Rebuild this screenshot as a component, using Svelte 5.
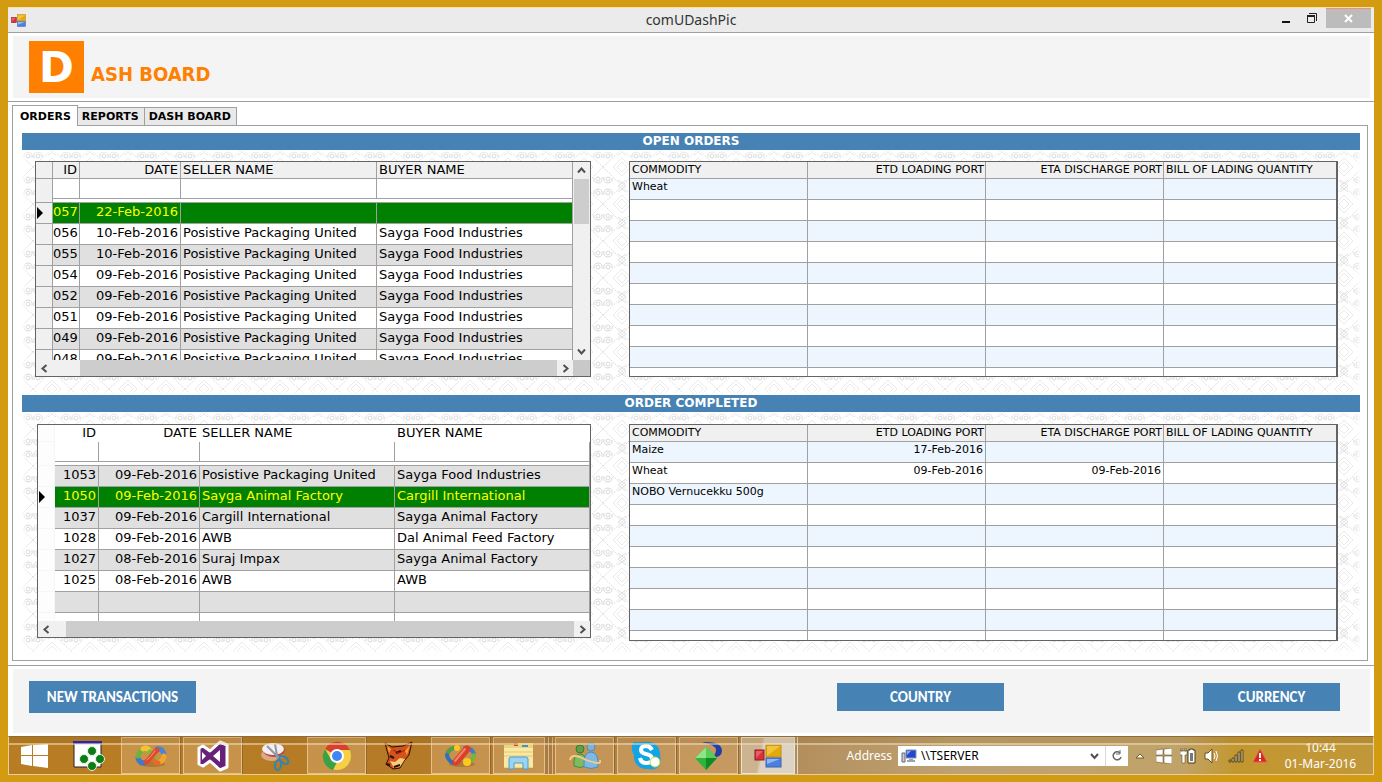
<script lang="ts">
  interface Order {
    id: string;
    date: string;
    seller: string;
    buyer: string;
  }

  interface Cargo {
    commodity: string;
    etd: string;
    eta: string;
    quantity: string;
  }

  const PACKAGING = 'Posistive Packaging United';
  const FOOD = 'Sayga Food Industries';
  const ANIMAL = 'Sayga Animal Factory';

  const tabs = ['ORDERS', 'REPORTS', 'DASH BOARD'];

  const openOrders: Order[] = [
    { id: '057', date: '22-Feb-2016', seller: '', buyer: '' },
    { id: '056', date: '10-Feb-2016', seller: PACKAGING, buyer: FOOD },
    { id: '055', date: '10-Feb-2016', seller: PACKAGING, buyer: FOOD },
    { id: '054', date: '09-Feb-2016', seller: PACKAGING, buyer: FOOD },
    { id: '052', date: '09-Feb-2016', seller: PACKAGING, buyer: FOOD },
    { id: '051', date: '09-Feb-2016', seller: PACKAGING, buyer: FOOD },
    { id: '049', date: '09-Feb-2016', seller: PACKAGING, buyer: FOOD },
    { id: '048', date: '09-Feb-2016', seller: PACKAGING, buyer: FOOD },
  ];

  const completedOrders: Order[] = [
    { id: '1053', date: '09-Feb-2016', seller: PACKAGING, buyer: FOOD },
    { id: '1050', date: '09-Feb-2016', seller: ANIMAL, buyer: 'Cargill International' },
    { id: '1037', date: '09-Feb-2016', seller: 'Cargill International', buyer: ANIMAL },
    { id: '1028', date: '09-Feb-2016', seller: 'AWB', buyer: 'Dal Animal Feed Factory' },
    { id: '1027', date: '08-Feb-2016', seller: 'Suraj Impax', buyer: ANIMAL },
    { id: '1025', date: '08-Feb-2016', seller: 'AWB', buyer: 'AWB' },
    { id: '', date: '', seller: '', buyer: '' },
    { id: '', date: '', seller: '', buyer: '' },
  ];

  const openCargo: Cargo[] = [{ commodity: 'Wheat', etd: '', eta: '', quantity: '' }];

  const completedCargo: Cargo[] = [
    { commodity: 'Maize', etd: '17-Feb-2016', eta: '', quantity: '' },
    { commodity: 'Wheat', etd: '09-Feb-2016', eta: '09-Feb-2016', quantity: '' },
    { commodity: 'NOBO Vernucekku 500g', etd: '', eta: '', quantity: '' },
  ];

  // the cargo grids always show ten lines, filled or not
  function padRows(rows: Cargo[]): Cargo[] {
    const blank = { commodity: '', etd: '', eta: '', quantity: '' };
    return [...rows, ...Array(10 - rows.length).fill(blank)];
  }

  let activeTab = $state('ORDERS');
  let openRow = $state(0);
  let completedRow = $state(1);
</script>

<svelte:head>
  <title>comUDashPic</title>
</svelte:head>

{#snippet formsIcon(size: number)}
  <svg width={size} height={size} viewBox="0 0 28 28" aria-hidden="true">
    <rect x="1" y="8" width="9" height="10" fill="#d9333a" stroke="#8e1820" />
    <path d="M2 9h7L2 16z" fill="#f08080" opacity="0.6" />
    <rect x="12" y="3" width="15" height="12" fill="#e5a90a" stroke="#c08a10" />
    <path d="M13 4h13L13 14z" fill="#f7cf55" opacity="0.7" />
    <rect x="12" y="16" width="15" height="9" fill="#4c80de" stroke="#3c62b4" />
    <path d="M13 17h13l-13 5z" fill="#a3c4fa" opacity="0.8" />
  </svg>
{/snippet}

{#snippet chevron(d: string)}
  <svg class="chevron" width="9" height="9" viewBox="0 0 9 9" aria-hidden="true">
    <path {d} fill="none" stroke="#505050" stroke-width="2" />
  </svg>
{/snippet}

{#snippet ringsIcon()}
  <svg width="32" height="24" viewBox="0 0 32 24" aria-hidden="true">
    <ellipse cx="17" cy="20" rx="13" ry="3" fill="#7a4a18" opacity="0.35" />
    <g fill="none" stroke-width="5" stroke-linecap="round">
      <path d="M10 19q-6 0-7-5" stroke="#3f78cf" />
      <path d="M3 12q1-4 4-6" stroke="#6fb23a" />
      <path d="M8 5q4-2 6 1" stroke="#f4c430" />
      <path d="M15 8l5 7" stroke="#7db83a" />
      <path d="M22 5q5-1 7 5" stroke="#4a84d8" />
      <path d="M29 12q0 4-4 6" stroke="#f2a52c" />
      <path d="M23 19q-2 0-4-2" stroke="#e86a2a" />
      <path d="M11 18q2-1 5-5t6-7" stroke="#e2492c" />
      <path d="M12 16q3-2 8-9" stroke="#f79a80" stroke-width="1" />
    </g>
  </svg>
{/snippet}

{#snippet linksIcon()}
  <svg width="32" height="24" viewBox="0 0 32 24" aria-hidden="true">
    <ellipse cx="17" cy="20" rx="13" ry="3" fill="#7a4a18" opacity="0.35" />
    <g fill="none" stroke-width="4" stroke-linecap="round">
      <path d="M9 4q-7 2-7 8" stroke="#4fa048" />
      <path d="M2 11q1 6 7 8" stroke="#2f6fc0" />
      <path d="M20 4q7 0 9 6" stroke="#3f78cf" />
      <path d="M29 11q0 5-7 8" stroke="#74b53a" />
      <path d="M11 18L22 5" stroke="#d9402a" stroke-width="7" />
      <path d="M10 17L20 5" stroke="#f08468" stroke-width="2" />
    </g>
    <circle cx="12" cy="4" r="3" fill="#ffc81e" />
    <circle cx="22" cy="18" r="4" fill="#ffc81e" />
  </svg>
{/snippet}

{#snippet orderGrid(rows: Order[], selected: number, pick: (i: number) => void, label: string)}
  <table class="orders" aria-label={label}>
    <colgroup>
      <col class="colMark" />
      <col class="colId" />
      <col class="colDate" />
      <col />
      <col />
    </colgroup>
    <thead>
      <tr>
        <th class="mark"></th>
        <th class="num">ID</th>
        <th class="num">DATE</th>
        <th>SELLER NAME</th>
        <th>BUYER NAME</th>
      </tr>
    </thead>
    <tbody>
      <tr class="filter">
        <td class="mark" rowspan="2"></td>
        <td><input type="text" aria-label="Filter {label} by id" /></td>
        <td><input type="text" aria-label="Filter {label} by date" /></td>
        <td><input type="text" aria-label="Filter {label} by seller" /></td>
        <td><input type="text" aria-label="Filter {label} by buyer" /></td>
      </tr>
      <tr class="divider"><td colspan="4"></td></tr>
      {#each rows as row, i}
        <tr class="row" class:shaded={i % 2 === 0} class:selected={i === selected} onclick={() => pick(i)}>
          <td class="mark">
            {#if i === selected}
              <svg width="7" height="12" viewBox="0 0 7 12" aria-hidden="true">
                <path d="M1 0l6 6-6 6z" fill="#000" />
              </svg>
            {/if}
          </td>
          <td class="num">{row.id}</td>
          <td class="num">{row.date}</td>
          <td>{row.seller}</td>
          <td>{row.buyer}</td>
        </tr>
      {/each}
    </tbody>
  </table>
{/snippet}

{#snippet cargoGrid(rows: Cargo[], label: string)}
  <table class="cargo" aria-label={label}>
    <colgroup>
      <col class="colCargo" />
      <col class="colCargo" />
      <col class="colCargo" />
      <col />
    </colgroup>
    <thead>
      <tr>
        <th>COMMODITY</th>
        <th class="num">ETD LOADING PORT</th>
        <th class="num">ETA DISCHARGE PORT</th>
        <th>BILL OF LADING QUANTITY</th>
      </tr>
    </thead>
    <tbody>
      {#each padRows(rows) as row, i}
        <tr class:tinted={i % 2 === 0}>
          <td>{row.commodity}</td>
          <td class="num">{row.etd}</td>
          <td class="num">{row.eta}</td>
          <td>{row.quantity}</td>
        </tr>
      {/each}
    </tbody>
  </table>
{/snippet}

<div class="desktop">
  <div class="window">
    <header class="titleBar">
      <span class="appIcon">{@render formsIcon(15)}</span>
      <span class="caption">comUDashPic</span>
      <div class="windowButtons">
        <button type="button" aria-label="Minimize">
          <svg width="12" height="12" viewBox="0 0 12 12"><path d="M2 9h8v2H2z" fill="#111" /></svg>
        </button>
        <button type="button" aria-label="Restore">
          <svg width="12" height="12" viewBox="0 0 12 12" fill="none" stroke="#222">
            <path d="M3 1.5h7.5V9" />
            <path d="M1.5 4.5h7v6h-7z" />
            <path d="M1 4h8" stroke-width="2" />
          </svg>
        </button>
        <button type="button" class="close" aria-label="Close">
          <svg width="9" height="9" viewBox="0 0 9 9"><path d="M1 1l7 7M8 1l-7 7" stroke="#fff" stroke-width="2" /></svg>
        </button>
      </div>
    </header>

    <div class="brand">
      <div class="brandPanel">
        <span class="brandLetter">D</span>
        <h1>ASH BOARD</h1>
      </div>
    </div>

    <div class="tabs" role="tablist">
      {#each tabs as tab}
        <button
          type="button"
          role="tab"
          class="tab"
          class:active={tab === activeTab}
          aria-selected={tab === activeTab}
          onclick={() => (activeTab = tab)}
        >{tab}</button>
      {/each}
    </div>

    <main class="panel">
      <h2>OPEN ORDERS</h2>
      <section class="ornate open">
        <div class="box orderBox">
          <div class="view">
            {@render orderGrid(openOrders, openRow, (i) => (openRow = i), 'Open orders')}
          </div>
          <div class="vbar">
            <span class="arrow">{@render chevron('M1 6.5l3.5-4 3.5 4')}</span>
            <span class="vthumb"></span>
            <span class="arrow last">{@render chevron('M1 2.5l3.5 4 3.5-4')}</span>
          </div>
          <div class="hbar">
            <span class="arrow">{@render chevron('M6.5 1l-4 3.5 4 3.5')}</span>
            <span class="hthumb"></span>
            <span class="arrow">{@render chevron('M2.5 1l4 3.5-4 3.5')}</span>
          </div>
          <div class="corner"></div>
        </div>
        <div class="box cargoBox">
          {@render cargoGrid(openCargo, 'Open order cargo')}
        </div>
      </section>

      <h2>ORDER COMPLETED</h2>
      <section class="ornate completed">
        <div class="box orderBox plain">
          <div class="view">
            {@render orderGrid(completedOrders, completedRow, (i) => (completedRow = i), 'Completed orders')}
          </div>
          <div class="hbar">
            <span class="arrow">{@render chevron('M6.5 1l-4 3.5 4 3.5')}</span>
            <span class="hthumb"></span>
            <span class="arrow">{@render chevron('M2.5 1l4 3.5-4 3.5')}</span>
          </div>
        </div>
        <div class="box cargoBox">
          {@render cargoGrid(completedCargo, 'Completed order cargo')}
        </div>
      </section>
    </main>

    <footer class="actions">
      <div class="actionPanel">
        <button type="button" class="action tall">NEW TRANSACTIONS</button>
        <button type="button" class="action country">COUNTRY</button>
        <button type="button" class="action currency">CURRENCY</button>
      </div>
    </footer>
  </div>

  <nav class="taskbar" aria-label="Taskbar">
    <button type="button" class="start" aria-label="Start">
      <svg width="27" height="24" viewBox="0 0 27 24" fill="#fff">
        <path d="M0 3l11-2v10H0zM12 1l15-1v11H12zM0 12h11v10L0 20zM12 12h15v12l-15-2z" />
      </svg>
    </button>

    <button type="button" class="task" aria-label="Nodes">
      <svg width="34" height="30" viewBox="0 0 34 30">
        <path d="M2 1h27v25H2z" fill="#fff" stroke="#222" />
        <path d="M1 0h29v3H1z" fill="#1b22c8" />
        <g fill="#0a7d16" stroke="#e9f2e4">
          <circle cx="20" cy="10" r="4.5" />
          <circle cx="12" cy="18" r="4.5" />
          <circle cx="28" cy="18" r="4.5" />
          <circle cx="20" cy="25" r="4.5" />
        </g>
      </svg>
    </button>

    <button type="button" class="task framed" aria-label="Data tools">{@render ringsIcon()}</button>

    <button type="button" class="task framed" aria-label="Visual Studio">
      <svg width="34" height="32" viewBox="0 0 34 32">
        <path d="M24 2l7 3v22l-7 3-10-9-7 5-4-2V8l4-2 7 5z" fill="#68217a" stroke="#fff" stroke-width="3" stroke-linejoin="round" />
        <path d="M24 10v12l-7-6zM6 12l4 4-4 4z" fill="#fff" />
      </svg>
    </button>

    <button type="button" class="task" aria-label="Snipping Tool">
      <svg width="32" height="30" viewBox="0 0 32 30">
        <ellipse cx="13" cy="14" rx="11" ry="6" fill="#dca988" />
        <ellipse cx="15" cy="9" rx="11" ry="7" fill="#c0453c" />
        <ellipse cx="14" cy="8" rx="11" ry="6" fill="#f2eef2" />
        <path d="M8 5l13 13M16 3l3 17" stroke="#8f98a4" stroke-width="2" />
        <ellipse cx="25" cy="19" rx="5" ry="3" fill="none" stroke="#2d86b4" stroke-width="2" transform="rotate(38 25 19)" />
        <ellipse cx="19" cy="24" rx="3" ry="5" fill="none" stroke="#2d86b4" stroke-width="2" transform="rotate(12 19 24)" />
      </svg>
    </button>

    <button type="button" class="task framed" aria-label="Chrome">
      <svg width="30" height="30" viewBox="0 0 30 30">
        <circle cx="15" cy="15" r="14" fill="#f5cf45" />
        <path d="M15 15L3 8A14 14 0 0 1 28 9H15z" fill="#d5402f" />
        <path d="M3 8l7 12 5 1-4 8A14 14 0 0 1 3 8z" fill="#3ba146" />
        <circle cx="15" cy="15" r="7" fill="#fff" />
        <circle cx="15" cy="15" r="5" fill="#4285f4" />
      </svg>
    </button>

    <button type="button" class="task" aria-label="FoxPro">
      <svg width="32" height="30" viewBox="0 0 32 30">
        <path d="M2 2l7 4 11-1 9-4-3 13-5 6-4 7-7 1-7-5 3-6z" fill="#d4521c" stroke="#2a1008" />
        <path d="M4 5l4 3-2 4zM27 4l-5 6 2 4z" fill="#efa32d" />
        <path d="M7 20l5 1 5-4 5 1-5 8-6 1z" fill="#f5cf7a" />
        <path d="M7 15l4 2M13 12l5-2M3 23l4 1M11 26l6-2" stroke="#2a1008" stroke-width="2" />
        <path d="M10 9l6 3 6-3" stroke="#a31b10" fill="none" />
      </svg>
    </button>

    <button type="button" class="task framed" aria-label="Data links">{@render linksIcon()}</button>

    <button type="button" class="task framed stacked" aria-label="File Explorer">
      <svg width="34" height="28" viewBox="0 0 34 28">
        <path d="M2 3h10l2-2h17v25H2z" fill="#ecd47c" />
        <path d="M2 6h29v19H2z" fill="#f8e9a6" />
        <path d="M12 1h4v3h-4z" fill="#d2472e" />
        <path d="M20 3h6v2h-6z" fill="#4a90d0" />
        <path d="M2 10h29M2 14h29" stroke="#e3c668" />
        <path d="M7 27V17q0-2 2-2h15q2 0 2 2v10h-5v-6h-9v6z" fill="#9bd3f3" stroke="#4c9ccf" />
      </svg>
    </button>

    <button type="button" class="task framed" aria-label="Messenger">
      <svg width="32" height="28" viewBox="0 0 32 28">
        <circle cx="11" cy="7" r="4" fill="#5f9f48" stroke="#3d7a2c" />
        <path d="M5 24q-1-12 6-12t6 12q-6 3-12 0z" fill="#7dbb62" stroke="#4b8a38" />
        <circle cx="22" cy="5" r="4" fill="#78b4dc" stroke="#4d8cbc" />
        <path d="M15 25q-1-15 7-15t7 15q-7 3-14 0z" fill="#7fb8e2" stroke="#4d8cbc" />
        <path d="M1 18q1-6 10-3 9 5 18 6 3 0 2-3" fill="none" stroke="#f2cf85" stroke-width="2" />
      </svg>
    </button>

    <button type="button" class="task framed" aria-label="Skype">
      <svg width="32" height="30" viewBox="0 0 32 30">
        <path d="M3 1h10c10-2 17 5 16 14 3 9-3 15-11 13C8 29 2 22 3 14 0 9 0 4 3 1z" fill="#12a5e6" />
        <path d="M21 9q-2-4-6-4-5 0-5 4 0 3 5 4 6 1 6 5t-6 4q-5 0-6-5" fill="none" stroke="#fff" stroke-width="4" />
        <circle cx="24" cy="21" r="5" fill="#fff" stroke="#c9d93c" />
      </svg>
    </button>

    <button type="button" class="task framed" aria-label="Downloads">
      <svg width="30" height="32" viewBox="0 0 30 32">
        <path d="M8 2q20-1 20 9 0 6-10 7 4-4 4-8 0-5-14-8z" fill="#223fa8" />
        <path d="M12 7l11 11-11 12L1 18z" fill="#2eb43a" />
        <path d="M12 7v11H1z" fill="#8ee487" />
        <path d="M12 7l11 11H12z" fill="#55cf57" />
        <path d="M12 30V18h11z" fill="#0f8a24" />
      </svg>
    </button>

    <button type="button" class="task framed current" aria-label="comUDashPic">{@render formsIcon(28)}</button>

    <div class="tray">
      <label class="addressLabel" for="address">Address</label>
      <div class="address">
        <svg width="16" height="14" viewBox="0 0 16 14" aria-hidden="true">
          <path d="M1 4h3v9H1z" fill="#c4ccd6" stroke="#667" />
          <path d="M5 1h10v8H5z" fill="#2348cf" stroke="#8a94a6" />
          <path d="M6 2h4L6 6z" fill="#88a8f6" />
          <path d="M8 10h4v1h2v2H6v-2h2z" fill="#9aa4b0" />
        </svg>
        <select id="address"><option>\\TSERVER</option></select>
        {@render chevron('M1 3l3.5 4 3.5-4')}
        <button type="button" aria-label="Refresh">
          <svg width="12" height="12" viewBox="0 0 12 12" fill="none" stroke="#666">
            <path d="M9 3a4 4 0 1 0 1 4" stroke-width="1.5" />
            <path d="M9 0v4H5" />
          </svg>
        </button>
      </div>
      <div class="trayIcons">
        <svg width="16" height="16" viewBox="0 0 16 16"><path d="M4 10l4-4 4 4z" fill="#fff" stroke="#7a5a20" /></svg>
        <svg width="16" height="16" viewBox="0 0 16 16" fill="#fff" stroke="#5c4514">
          <path d="M0 2l7-1v6H0zM8 1l8-1v7H8zM0 8h7v7l-7-1zM8 8h8v8l-8-1z" stroke-width="0.5" />
        </svg>
        <svg width="16" height="16" viewBox="0 0 16 16" fill="#fff" stroke="#4a3a18">
          <path d="M0 3h7v4H5v8H2V7H0zM1 0h1v3H1zM5 0h1v3H5z" stroke-width="0.5" />
          <path d="M8 2h2V1h3v1h2v13H8z" />
          <path d="M10 5h3v8h-3z" fill="#777" stroke="none" />
        </svg>
        <svg width="16" height="16" viewBox="0 0 16 16" fill="none" stroke="#fff">
          <path d="M1 5h3l4-4v14l-4-4H1z" fill="#fff" stroke="#6a5018" />
          <path d="M10 5q2 3 0 6M12 3q3 5 0 10" />
        </svg>
        <svg width="16" height="16" viewBox="0 0 16 16" fill="#d8ccb0" stroke="#5a4718">
          <path d="M1 12h2v2H1zM4 10h2v4H4zM7 7h2v7H7zM10 4h2v10h-2zM13 2h2v12h-2z" />
        </svg>
        <svg width="16" height="16" viewBox="0 0 16 16">
          <path d="M8 1l7 13H1z" fill="#d9251f" stroke="#e8604a" stroke-linejoin="round" />
          <path d="M8 5v5M8 11v2" stroke="#fff" stroke-width="2" />
        </svg>
      </div>
      <div class="clock">
        <span>10:44</span>
        <span>01-Mar-2016</span>
      </div>
    </div>
  </nav>
</div>

<style>
  :global(body) {
    background: #d39b12;
  }

  .desktop {
    padding: 7px 8px;
    font-family: Verdana, 'DejaVu Sans', sans-serif;
    font-size: 13px;
    color: #000;
  }

  .window {
    background: #fff;
  }

  button {
    padding: 0;
    border: 0;
    background: none;
    color: inherit;
    font: inherit;
  }

  svg {
    display: block;
    flex: none;
  }

  .titleBar {
    display: grid;
    grid-template-columns: 1fr auto 1fr;
    align-items: center;
    height: 26px;
    box-sizing: border-box;
    padding: 0 3px;
    background: #ebebeb;
    border-top: 1px solid #ffe09a;
    border-bottom: 1px solid #a0a0a0;
  }

  .caption {
    font-family: 'Segoe UI', 'Noto Sans', sans-serif;
    font-size: 14px;
    line-height: 20px;
    color: #333;
  }

  .windowButtons {
    display: flex;
    justify-content: flex-end;
    align-self: start;
  }

  .windowButtons button {
    display: flex;
    align-items: center;
    justify-content: center;
    width: 26px;
    height: 20px;
  }

  .windowButtons .close {
    width: 45px;
    margin-left: 1px;
    background: #bcbcbc;
    border-top: 1px solid #f08c80;
  }

  .brand {
    padding: 3px 4px 3px 5px;
    border-bottom: 1px solid #a0a0a0;
  }

  .brandPanel {
    display: flex;
    gap: 7px;
    padding: 5px 16px;
    background: #f4f4f4;
    color: #ff8000;
    font-weight: 700;
  }

  .brandLetter {
    width: 55px;
    height: 52px;
    background: #ff8000;
    color: #fff;
    font-size: 42px;
    line-height: 54px;
    text-align: center;
  }

  h1 {
    margin: 0;
    padding-top: 20px;
    font-family: Tahoma, 'DejaVu Sans Condensed', sans-serif;
    font-size: 20px;
    line-height: 26px;
  }

  .tabs {
    display: flex;
    align-items: flex-end;
    padding: 3px 4px 0;
  }

  .tab {
    height: 18px;
    padding: 0 5px 0 4px;
    border: 1px solid #a0a0a0;
    border-width: 1px 1px 0 0;
    background: #e9e9e9;
    font-size: 11px;
    font-weight: 700;
    line-height: 17px;
  }

  .tab.active {
    position: relative;
    height: 21px;
    margin-bottom: -1px;
    padding: 0 6px 0 7px;
    border-left-width: 1px;
    background: #fff;
  }

  .panel {
    margin: 0 6px 4px 4px;
    padding: 7px 7px 7px 9px;
    border: 1px solid #a0a0a0;
  }

  h2 {
    margin: 0;
    background: #4682b4;
    color: #fff;
    font-size: 12px;
    line-height: 17px;
    text-align: center;
  }

  /* scrollwork lattice behind the grids */
  .ornate {
    display: grid;
    align-items: start;
    column-gap: 38px;
    background: #fff url("data:image/svg+xml,%3Csvg xmlns='http://www.w3.org/2000/svg' width='38' height='37'%3E%3Cg fill='none' stroke='%23dedede'%3E%3Cpath d='M0 18L19 0L38 18L19 37Z' stroke-dasharray='2 1'/%3E%3Cpath d='M14 18l5-5 5 5-5 5zM10 18l9-9 9 9-9 9z' stroke='%23eaeaea'/%3E%3Cpath d='M15 0l8 6M23 0l-8 6M15 37l8-6M23 37l-8-6'/%3E%3Cg stroke='%23d8d8d8'%3E%3Ccircle cx='5' cy='7' r='2'/%3E%3Ccircle cx='33' cy='7' r='2'/%3E%3Ccircle cx='5' cy='30' r='2'/%3E%3Ccircle cx='33' cy='30' r='2'/%3E%3Cpath d='M1 9q-1-6 4-6 5 1 4 5M37 9q1-6-4-6-5 1-4 5M1 28q-1 6 4 6 5-1 4-5M37 28q1 6-4 6-5-1-4-5'/%3E%3C/g%3E%3C/g%3E%3C/svg%3E") 11px 36px;
    box-shadow: inset 0 0 4px 2px #fff;
  }

  .open {
    grid-template-columns: 556fr 709fr;
    padding: 11px 22px 18px 13px;
  }

  .completed {
    grid-template-columns: 554fr 709fr;
    padding: 12px 22px 12px 15px;
  }

  .box {
    border: 1px solid #646464;
    background: #fff;
    overflow: hidden;
    min-width: 0;
  }

  .orderBox {
    display: grid;
    grid-template: 198px 16px / minmax(0, 1fr) 17px;
  }

  .orderBox.plain {
    grid-template: 196px 16px / minmax(0, 1fr);
  }

  .cargoBox {
    height: 214px;
    border-right-width: 2px;
  }

  .completed .cargoBox {
    height: 215px;
  }

  .view {
    overflow: hidden;
  }

  table {
    width: 100%;
    table-layout: fixed;
    border-collapse: separate;
    border-spacing: 0;
    white-space: nowrap;
  }

  th,
  td {
    height: 20px;
    padding: 0 2px;
    border: 0 solid #a0a0a0;
    border-width: 0 1px 1px 0;
    overflow: hidden;
    font-weight: 400;
    line-height: 17px;
    text-align: left;
    vertical-align: top;
  }

  th {
    height: 16px;
    line-height: 16px;
    background: #f0f0f0;
  }

  .num {
    padding-left: 0;
    text-align: right;
  }

  .colMark {
    width: 17px;
  }

  .colId {
    width: 27px;
  }

  .plain .colId {
    width: 44px;
  }

  .colDate {
    width: 101px;
  }

  .colCargo {
    width: 178px;
  }

  .mark {
    background: #f0f0f0;
  }

  .row .mark {
    padding: 4px 0 0;
    height: 16px;
  }

  .filter td {
    height: 19px;
    padding: 0;
  }

  .filter input {
    display: block;
    width: 100%;
    height: 19px;
    box-sizing: border-box;
    padding: 0 2px;
    border: 0;
    outline: 0;
    background: none;
    font: inherit;
  }

  .divider td {
    height: 3px;
    padding: 0;
    line-height: 0;
  }

  .shaded td:not(.mark) {
    background: #e0e0e0;
  }

  .selected td:not(.mark) {
    background: #008000;
    color: #ff0;
  }

  .plain th {
    border-color: transparent;
    background: #fff;
  }

  .plain .mark {
    border-color: #f4f6fa;
    background: #fdfdfe;
  }

  .cargo {
    font-size: 11px;
  }

  .cargo th.num {
    padding-right: 1px;
  }

  .cargo td {
    line-height: 15px;
  }

  .cargo tr :last-child {
    border-right: 0;
  }

  .tinted td {
    background: #edf6fe;
  }

  .vbar,
  .hbar {
    display: flex;
    background: #f0f0f0;
  }

  .vbar {
    flex-direction: column;
    padding: 0 1px;
  }

  .arrow {
    display: flex;
    align-items: center;
    justify-content: center;
    width: 15px;
    height: 17px;
  }

  .hbar .arrow {
    width: 16px;
    height: 16px;
  }

  .arrow.last {
    margin-top: auto;
  }

  .vthumb {
    height: 45px;
    background: #cdcdcd;
  }

  .hthumb {
    flex: 1;
    margin-left: 28px;
    background: #cdcdcd;
  }

  .plain .hthumb {
    margin-left: 12px;
  }

  .corner {
    background: #c8c8c8;
  }

  .actions {
    padding: 3px 4px 3px 5px;
    border-top: 1px solid #a0a0a0;
  }

  .actionPanel {
    display: flex;
    align-items: center;
    padding: 12px 30px 20px 16px;
    background: #f4f4f4;
  }

  .action {
    width: 167px;
    height: 28px;
    background: #4682b4;
    color: #fff;
    font-family: Calibri, Lato, sans-serif;
    font-size: 15px;
    font-weight: 700;
  }

  .action.tall {
    height: 32px;
  }

  .action.country {
    margin-left: auto;
  }

  .action.currency {
    width: 137px;
    margin-left: 199px;
  }

  .taskbar {
    position: relative;
    display: flex;
    height: 39px;
    box-sizing: border-box;
    border: 1px solid #e6cf9c;
    border-top-color: #8e6c38;
    background: linear-gradient(90deg, #b87d24 0%, #b57a26 30%, #b08044 45%, #b48f5e 58%, #bfa273 70%, #c0a368 86%, #c3972f 90%, #c0973a 100%);
    font-family: 'Segoe UI', 'Noto Sans', sans-serif;
    font-size: 12px;
    color: #fff;
  }

  /* glass reflection running the length of the bar */
  .taskbar::after {
    content: '';
    position: absolute;
    inset: 0 0 auto;
    height: 6px;
    border-bottom: 2px solid rgba(255, 240, 205, 0.5);
    background: rgba(120, 80, 20, 0.15);
    pointer-events: none;
  }

  .start,
  .task {
    display: flex;
    align-items: center;
    justify-content: center;
  }

  .start {
    width: 50px;
  }

  .task {
    width: 59px;
    margin-right: 3px;
    border: 1px solid transparent;
    box-sizing: border-box;
  }

  .task.framed {
    border-color: rgba(255, 230, 190, 0.55);
    background: rgba(215, 170, 110, 0.5);
    box-shadow: 1px 0 #93662c;
  }

  .task.stacked {
    width: 52px;
    margin-right: 10px;
    box-shadow: 3px 0 #a87c44, 4px 0 #dcb887, 7px 0 #a87c44, 8px 0 #dcb887;
  }

  .task.current {
    width: 54px;
    background: linear-gradient(100deg, #cdb491 35%, #ddd3c4 40%);
    border-color: #efe3cf;
    box-shadow: 2px 0 #a98d63, 3px 0 #e8dcc8;
  }

  .tray {
    display: flex;
    align-items: center;
    margin-left: auto;
  }

  .addressLabel {
    margin-right: 6px;
  }

  .address {
    display: flex;
    align-items: center;
    width: 230px;
    height: 20px;
    box-sizing: border-box;
    padding-left: 3px;
    background: #fff;
    color: #000;
  }

  .address select {
    flex: 1;
    min-width: 0;
    padding: 0 4px;
    border: 0;
    outline: 0;
    appearance: none;
    background: none;
    color: #000;
    font: inherit;
  }

  .address button {
    display: flex;
    align-items: center;
    justify-content: center;
    width: 23px;
    height: 20px;
    margin-left: 6px;
    border-left: 1px solid #d8d8d8;
  }

  .trayIcons {
    display: flex;
    gap: 8px;
    margin-left: 4px;
  }

  .clock {
    display: flex;
    flex-direction: column;
    width: 105px;
    line-height: 16px;
    text-align: center;
  }
</style>
